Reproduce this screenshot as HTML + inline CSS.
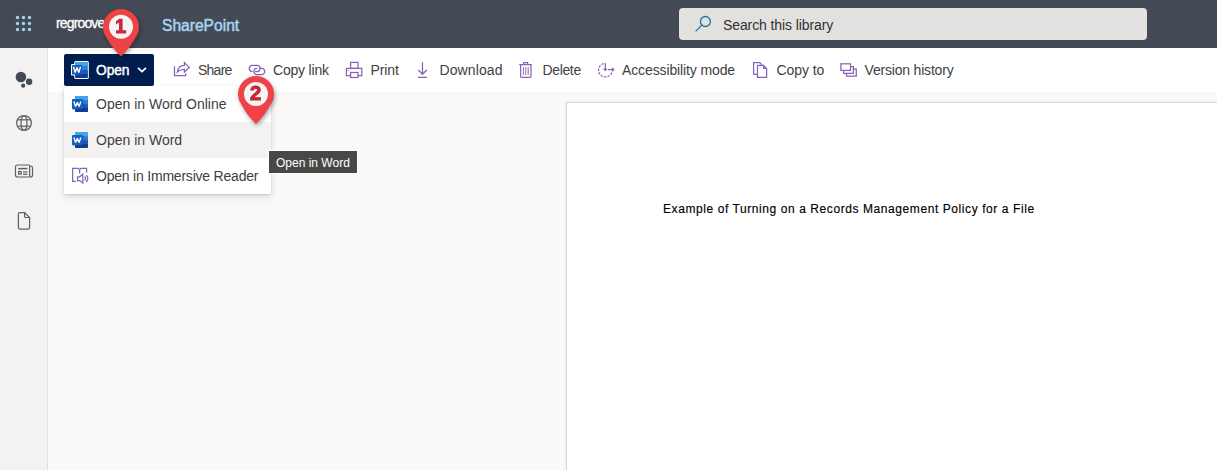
<!DOCTYPE html>
<html><head><meta charset="utf-8">
<style>
*{margin:0;padding:0;box-sizing:border-box}
html,body{width:1217px;height:470px;overflow:hidden;background:#faf9f8;font-family:"Liberation Sans",sans-serif;position:relative}
.abs{position:absolute}
.t{position:absolute;white-space:nowrap;line-height:1}
svg{position:absolute;overflow:visible}
#hdr{left:0;top:0;width:1217px;height:48px;background:#434a55}
#rail{left:0;top:48px;width:48px;height:422px;background:#f3f2f1;border-right:1px solid #e1dfdd}
#cmd{left:48px;top:48px;width:1169px;height:44px;background:#fff}
#search{left:679px;top:8px;width:468px;height:32px;background:#e2e1df;border-radius:4px}
#openbtn{left:64px;top:54px;width:90px;height:32px;background:#001d4f;border-radius:2px}
.ct{font-size:14px;color:#41403f}
.mt{font-size:14px;color:#41403f}
#menu{left:64px;top:86px;width:207px;height:108px;background:#fff;box-shadow:0 3.2px 7.2px rgba(0,0,0,.13),0 .6px 1.8px rgba(0,0,0,.11)}
#hov{left:64px;top:122px;width:207px;height:36px;background:#f3f2f1}
#tip{left:268px;top:150px;width:90px;height:24px;background:#484848;border:1px solid #fff}
#page{left:566px;top:102px;width:700px;height:400px;background:#fff;border:1px solid #d4d4d8;box-shadow:0 0 4px rgba(0,0,0,.06)}
.ic{fill:none;stroke:#8764b8;stroke-width:1.25}
.ri{fill:none;stroke:#605e5c;stroke-width:1.2}
</style></head><body>
<div id="hdr" class="abs"></div>
<!-- waffle -->
<svg style="left:0;top:0" width="48" height="48">
<g fill="#a6d2f0"><circle cx="17.5" cy="17.5" r="1.65"/><circle cx="23.5" cy="17.5" r="1.65"/><circle cx="29.5" cy="17.5" r="1.65"/><circle cx="17.5" cy="23.5" r="1.65"/><circle cx="23.5" cy="23.5" r="1.65"/><circle cx="29.5" cy="23.5" r="1.65"/><circle cx="17.5" cy="29.5" r="1.65"/><circle cx="23.5" cy="29.5" r="1.65"/><circle cx="29.5" cy="29.5" r="1.65"/></g></svg>
<div class="t" style="left:56px;top:16px;font-size:14px;color:#fff;letter-spacing:-0.85px;-webkit-text-stroke:0.3px #fff">regroove</div>
<div class="t" style="left:162px;top:17.5px;font-size:15.6px;color:#a8d3ee;-webkit-text-stroke:0.5px #a8d3ee;letter-spacing:0px">SharePoint</div>
<div id="search" class="abs"></div>
<svg style="left:0;top:0" width="1" height="1"><circle cx="705.4" cy="21.5" r="5.0" fill="none" stroke="#2272a4" stroke-width="1.3"/><line x1="701.8" y1="25.1" x2="695.6" y2="31.3" stroke="#2272a4" stroke-width="1.2"/></svg>
<div class="t" style="left:723px;top:18px;font-size:14px;color:#323130;letter-spacing:-0.1px">Search this library</div>

<div id="rail" class="abs"></div>
<svg style="left:0;top:0" width="1" height="1">
<g fill="#434a55"><circle cx="20.9" cy="77" r="5.3"/><circle cx="29.1" cy="81.8" r="3.2"/><circle cx="23.2" cy="85.7" r="2.1"/></g>
<g class="ri">
<circle cx="24" cy="123" r="7.4"/><ellipse cx="24" cy="123" rx="3" ry="7.4"/><line x1="17.6" y1="119.8" x2="30.4" y2="119.8"/><line x1="17.6" y1="126.2" x2="30.4" y2="126.2"/>
<path d="M29.6 165 H17.5 a2 2 0 0 0 -2 2 V175 a2 2 0 0 0 2 2 H30.5 a2 2 0 0 0 2 -2 V168 a2 2 0 0 0 -2 -2 H29.6 V176.5"/>
<line x1="18.2" y1="168.6" x2="27.5" y2="168.6" stroke-width="1.5"/>
<rect x="18.6" y="171.5" width="2.6" height="2.6"/>
<line x1="23" y1="172" x2="27.5" y2="172"/><line x1="23" y1="174.3" x2="27.5" y2="174.3"/>
<path d="M20 212.6 H24.6 L29.6 217.6 V227.6 a1.6 1.6 0 0 1 -1.6 1.6 H20 a1.6 1.6 0 0 1 -1.6 -1.6 V214.2 a1.6 1.6 0 0 1 1.6 -1.6 Z"/>
<path d="M24.6 212.8 V216.3 a1.2 1.2 0 0 0 1.2 1.2 H29.4"/>
</g>
</svg>

<div id="cmd" class="abs"></div>
<div id="page" class="abs"></div>
<div class="t" style="left:663px;top:203px;font-size:12px;color:#000;letter-spacing:0.58px;-webkit-text-stroke:0.15px #000">Example of Turning on a Records Management Policy for a File</div>

<div id="openbtn" class="abs"></div>
<svg style="left:0;top:0" width="1" height="1">
<rect x="74.2" y="61" width="14.6" height="18" rx="1.5" fill="#fff"/>
<rect x="71" y="64" width="12" height="11.6" rx="1.2" fill="#fff"/>
<rect x="75.2" y="62" width="12.6" height="16" rx="0.8" fill="#2b7cd3"/>
<rect x="75.2" y="62" width="12.6" height="4" fill="#41a5ee"/>
<rect x="75.2" y="70" width="12.6" height="4" fill="#185abd"/>
<path d="M75.2 74 H87.8 V77.2 a.8 .8 0 0 1 -.8 .8 H76 a.8 .8 0 0 1 -.8 -.8 Z" fill="#103f91"/>
<rect x="72" y="65" width="10" height="9.6" rx=".6" fill="#185abd"/>
<polyline points="73.5,66.8 75.2,72.6 77,67.6 78.8,72.6 80.5,66.8" fill="none" stroke="#fff" stroke-width="1.4" stroke-linejoin="bevel"/>
<path d="M138 67.8 L142 71.6 L146 67.8" fill="none" stroke="#fff" stroke-width="1.8"/>
</svg>
<div class="t" style="left:96px;top:64px;font-size:13.8px;color:#fff;-webkit-text-stroke:0.45px #fff;letter-spacing:-0.1px">Open</div>

<svg style="left:0;top:0" width="1" height="1">
<g class="ic">
<path d="M174.5 66.2 V75.5 H185.6 V73.2"/>
<path d="M177.4 72 C178 67.4 181 65.4 184.4 65.4 V62.6 L189.2 67.4 L184.4 72 V69.4 C181.6 69.4 179.2 70.2 177.4 72 Z"/>
<path d="M252.6 71.6 H252.4 a3.1 3.1 0 0 1 0 -6.2 H257 a3.1 3.1 0 0 1 0 6.2 H255"/>
<path d="M259.5 68.4 H261.6 a3.1 3.1 0 0 1 0 6.2 H257 a3.1 3.1 0 0 1 0 -6.2 H257.3"/>
<rect x="350.6" y="62.4" width="7.4" height="6"/>
<rect x="346.4" y="68.4" width="15.4" height="7.2"/>
<rect x="350.6" y="72.5" width="7.4" height="5" fill="#fff"/>
<path d="M422.5 62.2 V74.3 M418.2 70 L422.5 74.3 L426.8 70 M417.8 77.4 H427"/>
<path d="M519.2 64.6 H531.8 M523.6 64.6 V62.6 H527.6 V64.6 M520.6 64.6 V76.6 a.8 .8 0 0 0 .8 .8 H530.2 a.8 .8 0 0 0 .8 -.8 V64.6"/><path d="M523.4 67 V75 M525.8 67 V75 M528.2 67 V75" stroke-width="0.95"/>
<path d="M603.6 63.6 A6.8 6.8 0 1 0 611.8 72.4" stroke-dasharray="2.4 1.2"/>
<path d="M605.3 63 V70.2 M603.6 68.6 L605.3 70.4 L607 68.6 M608 69.6 H613.8 M612 67.9 L613.8 69.6 L612 71.3"/>
<path d="M757.5 74.4 H753.6 V62.5 H759.6 L761.9 64.8"/>
<path d="M757.5 65.4 H763.6 L766.6 68.4 V77.3 H757.5 Z M763.6 65.4 V68.4 H766.6"/>
<rect x="840.9" y="63.8" width="9.6" height="6.6"/>
<path d="M850.5 66.5 H853.4 V73.3 H843.6 V70.4"/>
<path d="M853.4 69.1 H856.3 V76.1 H846.5 V73.3"/>
</g>
<circle cx="348.6" cy="70.5" r=".6" fill="#8764b8"/>
</svg>
<div class="t ct" style="left:198px;top:63px;letter-spacing:-0.75px">Share</div>
<div class="t ct" style="left:273px;top:63px;letter-spacing:-0.2px">Copy link</div>
<div class="t ct" style="left:370.5px;top:63px;letter-spacing:-0.1px">Print</div>
<div class="t ct" style="left:439.5px;top:63px;letter-spacing:0.1px">Download</div>
<div class="t ct" style="left:542.5px;top:63px;letter-spacing:-0.36px">Delete</div>
<div class="t ct" style="left:622px;top:63px;letter-spacing:-0.12px">Accessibility mode</div>
<div class="t ct" style="left:776.5px;top:63px;letter-spacing:-0.07px">Copy to</div>
<div class="t ct" style="left:864.5px;top:63px;letter-spacing:-0.19px">Version history</div>

<div id="menu" class="abs"></div>
<div id="hov" class="abs"></div>
<svg style="left:0;top:0" width="1" height="1">
<g id="wd">
<rect x="75" y="96" width="13" height="16" rx="1" fill="#2b7cd3"/>
<path d="M75 97 a1 1 0 0 1 1 -1 H87 a1 1 0 0 1 1 1 V100.2 H75 Z" fill="#41a5ee"/>
<rect x="75" y="104.2" width="13" height="3.8" fill="#185abd"/>
<path d="M75 108 H88 V111 a1 1 0 0 1 -1 1 H76 a1 1 0 0 1 -1 -1 Z" fill="#103f91"/>
<rect x="73" y="100" width="11" height="10.2" fill="#000" opacity=".12"/>
<rect x="72" y="99" width="10.8" height="10.2" rx=".8" fill="#1b5ebe"/>
<polyline points="73.9,101.5 75.6,106.6 77.4,102.2 79.1,106.6 80.8,101.5" fill="none" stroke="#fff" stroke-width="1.35" stroke-linejoin="bevel"/>
</g>
<use href="#wd" y="36"/>
<g class="ic">
<path d="M76.2 181.3 H72.6 V168.4 H78.4 L79.6 169.8 L80.8 168.4 H86.6 V172.6 M79.6 169.8 V173.6"/>
<path d="M77.6 176.8 H79.8 L82.8 174.2 V183.2 L79.8 180.6 H77.6 Z"/>
<path d="M84.6 176.6 a2.4 2.4 0 0 1 0 3.8 M86.3 175.2 a4.4 4.4 0 0 1 0 6.6"/>
</g>
</svg>
<div class="t mt" style="left:96px;top:96.5px">Open in Word Online</div>
<div class="t mt" style="left:96px;top:132.5px">Open in Word</div>
<div class="t mt" style="left:96px;top:168.5px;letter-spacing:-0.21px">Open in Immersive Reader</div>
<div id="tip" class="abs"></div>
<div class="t" style="left:276px;top:157px;font-size:12px;color:#fff">Open in Word</div>

<!-- pins -->
<svg style="left:0;top:0;filter:drop-shadow(1px 2px 2px rgba(0,0,0,.35))" width="1" height="1">
<path transform="translate(121 27)" d="M0 29.5 Q-8.8 21.4 -14.4 10.8 A18 18 0 1 1 14.4 10.8 Q8.8 21.4 0 29.5 Z" fill="#ee4246"/>
<circle cx="121" cy="26.8" r="12" fill="#f4f4f4"/>
<path d="M116 21.3 L119.3 18.7 H122.6 V30.3 H126.2 V33.6 H116 V30.3 H119 V22.6 L116 24.6 Z" fill="#c8283a"/>
<path transform="translate(256 94)" d="M0 30 Q-8.8 21.7 -14.4 10.8 A18 18 0 1 1 14.4 10.8 Q8.8 21.7 0 30 Z" fill="#ee4246"/>
<circle cx="256" cy="94" r="12" fill="#f4f4f4"/>
</svg>
<div class="t" style="left:249.8px;top:82px;font-size:21px;font-weight:bold;color:#c4272f;-webkit-text-stroke:0.8px #c4272f">2</div>
</body></html>
